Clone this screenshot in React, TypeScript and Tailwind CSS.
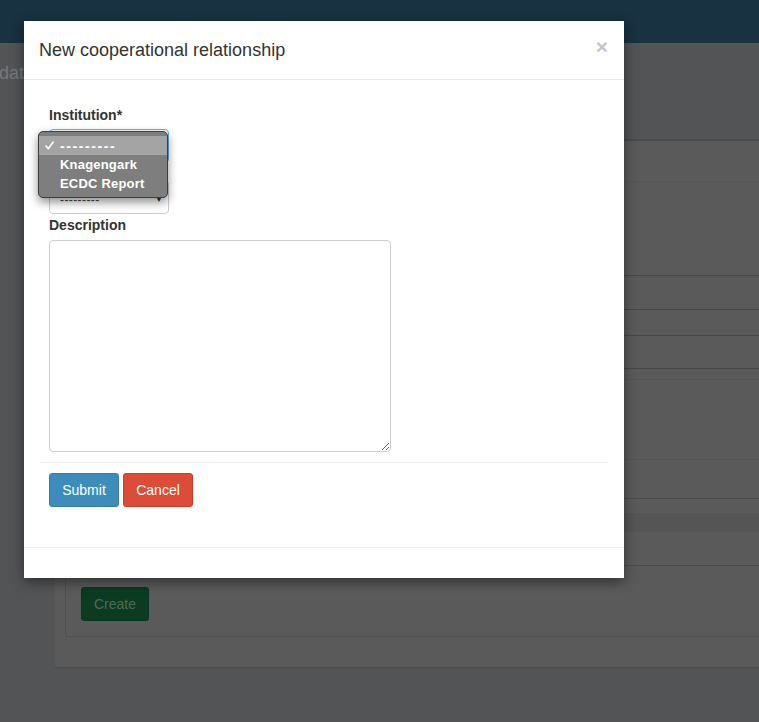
const font = { fontFamily: '"Liberation Sans", Arial, sans-serif' };

function Check() {
  return (
    <svg width="9" height="9" viewBox="0 0 9 9" className="shrink-0">
      <path d="M1 5 L3.4 7.6 L8 1.2" fill="none" stroke="white" strokeWidth="1.6" strokeLinecap="round" strokeLinejoin="round" />
    </svg>
  );
}

function Background() {
  return (
    <div className="absolute inset-0">
      {/* navbar */}
      <div className="h-[43px] bg-[#183242]" />
      <div className="mt-[18px] h-[24px] text-[18px] leading-[24px] text-[#777879] -ml-[1px]">date</div>

      {/* outer box */}
      <div className="mt-[54px] ml-[54px] w-[740px] bg-[#5a5a5a] border-t-2 border-[#4a4b4c] border-b border-l border-b-[#4d4d4d] border-l-[#555] rounded-b-[3px]">
        <div className="h-[41px] border-b border-[#565656]" />
        {/* inner box */}
        <div className="ml-[10px] border-l border-b border-[#505050] rounded-bl-[3px]">
          <div className="h-[94px] border-b border-[#474747]" />
          <div className="h-[34px] border-b border-[#474747]" />
          <div className="h-[26px] border-b border-[#474747]" />
          <div className="h-[33px] border-b border-[#474747]" />
          <div className="h-[11px] border-b border-[#555]" />
          <div className="h-[80px] border-b border-[#555]" />
          <div className="h-[39px] border-b border-[#4c4c4c]" />
          <div className="h-[14px]" />
          <div className="h-[19px] bg-[#555]" />
          <div className="h-[34px] border-b border-[#4c4c4c]" />
          <div className="h-[70px] pt-[21px] pl-[15px]">
            <div className="w-[68px] h-[34px] rounded-[3px] bg-[#0b3c22] border border-[#08351d] flex items-center justify-center text-[14px] text-[#4c6b57]">
              Create
            </div>
          </div>
        </div>
        <div className="h-[30px]" />
      </div>
    </div>
  );
}

function Modal() {
  return (
    <div className="absolute left-[24px] top-[21px] w-[600px] bg-white shadow-[0_4px_12px_rgba(0,0,0,0.45)]">
      {/* header */}
      <div className="h-[59px] px-[15px] border-b border-[#e9e9e9] flex items-center justify-between">
        <h4 className="text-[18px] leading-[26px] text-[#333] -mt-[1px]">New cooperational relationship</h4>
        <span className="text-[21px] font-bold leading-none text-[#c6c6c6] -mt-[8px] mr-[1px]">×</span>
      </div>

      {/* body */}
      <div className="px-4 pt-[25px]">
        <div className="pl-[9px] relative">
          <div className="text-[14px] leading-[20px] font-bold text-[#333]">Institution*</div>
          <div className="mt-[4px] w-[120px] h-[34px] border border-[#66afe9] rounded-[4px]" />
          <div className="mt-[17px] w-[120px] h-[34px] border border-[#ccc] rounded-[4px] flex items-center justify-between pl-[10px] pr-[5px] pt-[5px]">
            <span className="text-[12px] text-[#444] tracking-[0.4px]">---------</span>
            <span className="text-[8px] text-[#333]">▼</span>
          </div>
          <div className="mt-[1px] text-[14px] leading-[20px] font-bold text-[#333]">Description</div>
          <textarea
            readOnly
            className="mt-[5px] block w-[342px] h-[212px] border border-[#ccc] rounded-[4px] outline-none"
          />

          {/* native select popup */}
          <div className="absolute left-[-2px] top-[26px] w-[130px] rounded-[5px] bg-[#7e7e7e] border border-[#3d3d3d] shadow-[0_4px_10px_rgba(0,0,0,0.45)] py-[4px] text-[13px] font-bold text-white">
            <div className="h-[19px] bg-[#a4a4a4] flex items-center pl-[6px] gap-[6px]">
              <Check />
              <span className="text-[14px] tracking-[1.6px] pt-[1px]">---------</span>
            </div>
            <div className="h-[19px] flex items-center pl-[21px] tracking-[0.2px]">Knagengark</div>
            <div className="h-[19px] flex items-center pl-[21px] tracking-[0.2px]">ECDC Report</div>
          </div>
        </div>

        <div className="mt-[10px] border-t border-[#eee]" />

        <div className="pl-[9px] pt-[10px] flex gap-[4px]">
          <div className="w-[70px] h-[34px] rounded-[3px] bg-[#3c8dbc] border border-[#367fa9] flex items-center justify-center text-[14px] text-white">
            Submit
          </div>
          <div className="w-[70px] h-[34px] rounded-[3px] bg-[#dd4b39] border border-[#d73925] flex items-center justify-center text-[14px] text-white">
            Cancel
          </div>
        </div>
        <div className="h-[40px]" />
      </div>

      {/* footer */}
      <div className="h-[31px] border-t border-[#f0f0f0]" />
    </div>
  );
}

export default function App() {
  return (
    <div className="relative w-[759px] h-[722px] overflow-hidden bg-[#535456]" style={font}>
      <Background />
      <Modal />
    </div>
  );
}
